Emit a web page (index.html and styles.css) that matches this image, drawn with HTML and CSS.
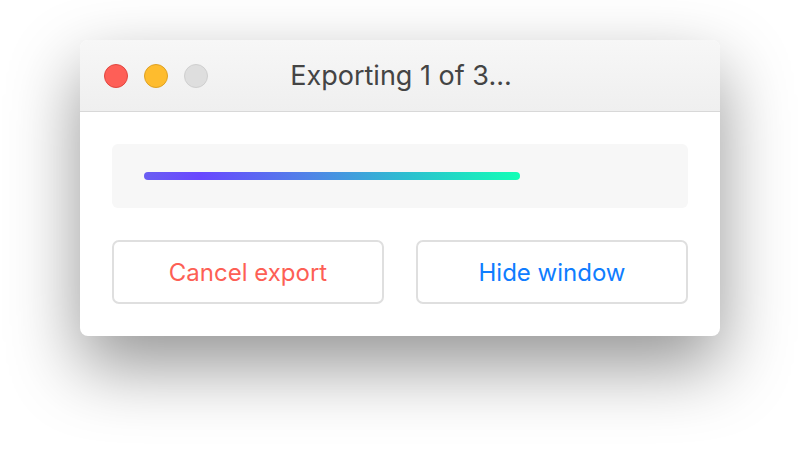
FILE: index.html
```html
<!DOCTYPE html>
<html>
<head>
<meta charset="utf-8">
<link rel="stylesheet" href="styles.css">
</head>
<body>
  <div class="window">
    <div class="titlebar">
      <div class="lights">
        <span class="light red"></span>
        <span class="light yellow"></span>
        <span class="light gray"></span>
      </div>
      <div class="title">Exporting 1 of 3...</div>
    </div>
    <div class="content">
      <div class="progress-box">
        <div class="progress-bar" style="width: 376px"></div>
      </div>
      <div class="buttons">
        <button class="btn btn-cancel">Cancel export</button>
        <button class="btn btn-hide">Hide window</button>
      </div>
    </div>
  </div>
</body>
</html>
```
FILE: styles.css
```css
html, body {
  margin: 0;
  padding: 0;
  background: #ffffff;
}
body {
  width: 800px;
  height: 456px;
  overflow: hidden;
  padding-top: 40px;
  box-sizing: border-box;
  font-family: Inter, "Open Sans", "Liberation Sans", sans-serif;
}
.window {
  width: 640px;
  margin: 0 auto;
  background: #fff;
  border-radius: 8px;
  box-shadow: 0 30px 70px rgba(0, 0, 0, 0.42);
  overflow: hidden;
}
.titlebar {
  position: relative;
  height: 71px;
  border-bottom: 1px solid #d8d8d8;
  background: linear-gradient(to bottom, #f7f7f7, #efefef);
  display: flex;
  align-items: center;
  justify-content: center;
}
.lights {
  position: absolute;
  left: 24px;
  top: 24px;
  display: flex;
  gap: 16px;
}
.light {
  width: 24px;
  height: 24px;
  border-radius: 50%;
  box-sizing: border-box;
}
.red { background: #fe5f57; border: 1px solid #e1463f; }
.yellow { background: #febc2e; border: 1px solid #dea123; }
.gray { background: #dedede; border: 1px solid #cfcfcf; }
.title {
  font-size: 27px;
  color: #444;
  padding-left: 2px;
}
.content {
  padding: 32px;
  display: flex;
  flex-direction: column;
  gap: 32px;
}
.progress-box {
  height: 64px;
  background: #f7f7f7;
  border-radius: 6px;
  padding: 0 32px;
  display: flex;
  align-items: center;
}
.progress-bar {
  height: 8px;
  border-radius: 4px;
  background: linear-gradient(to right, #6a5ef2 0%, #6947ff 15%, #4e86e6 45%, #2cbfd0 70%, #12ffb6 100%);
}
.buttons {
  display: flex;
  gap: 32px;
}
.btn {
  flex: 1;
  height: 64px;
  background: #fff;
  border: 2px solid #dfdfdf;
  border-radius: 7px;
  font-family: inherit;
  font-size: 24px;
  cursor: pointer;
}
.btn-cancel { color: #fd5f55; }
.btn-hide { color: #0f7dff; }
```
